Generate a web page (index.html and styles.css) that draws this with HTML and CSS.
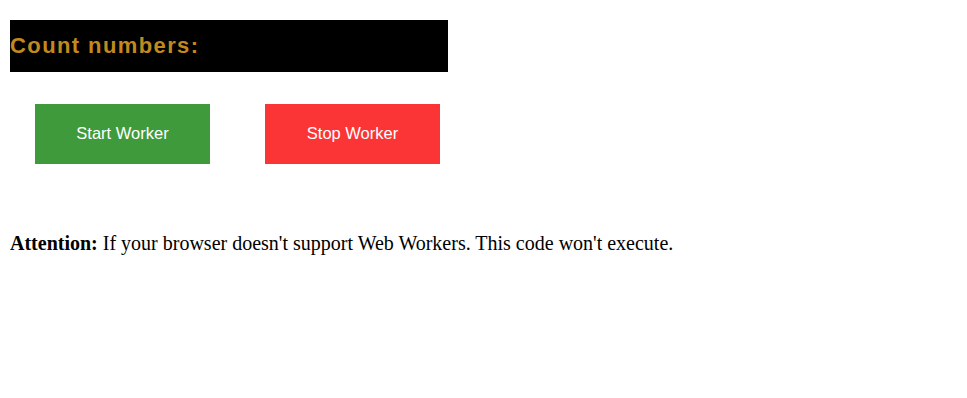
FILE: index.html
```html
<!DOCTYPE html>
<html>
<head>
<meta charset="utf-8">
<link rel="stylesheet" href="styles.css">
</head>
<body>
<h1 class="title">Count numbers:</h1>
<div class="actions">
  <button class="btn btn-start">Start Worker</button>
  <button class="btn btn-stop">Stop Worker</button>
</div>
<p class="note"><strong>Attention:</strong> If your browser doesn't support Web Workers. This code won't execute.</p>
</body>
</html>
```
FILE: styles.css
```css
body {
  margin: 20px 10px;
  font-family: "Liberation Serif", serif;
}
.title {
  margin: 0;
  width: 438px;
  height: 52px;
  display: flex;
  align-items: center;
  background: #000;
  color: #c08a1f;
  font-family: "Liberation Sans", Arial, sans-serif;
  font-size: 22px;
  letter-spacing: 1.4px;
  font-weight: bold;
}
.actions {
  margin-top: 32px;
  display: flex;
  gap: 55px;
  padding-left: 25px;
}
.btn {
  width: 175px;
  height: 60px;
  padding: 0 0 2px;
  border: none;
  color: #fff;
  font-family: "Liberation Sans", Arial, sans-serif;
  font-size: 16.5px;
}
.btn-start { background: #3f9a3b; }
.btn-stop { background: #fb3435; }
.note {
  margin: 68px 0 0;
  font-size: 20px;
}
```
